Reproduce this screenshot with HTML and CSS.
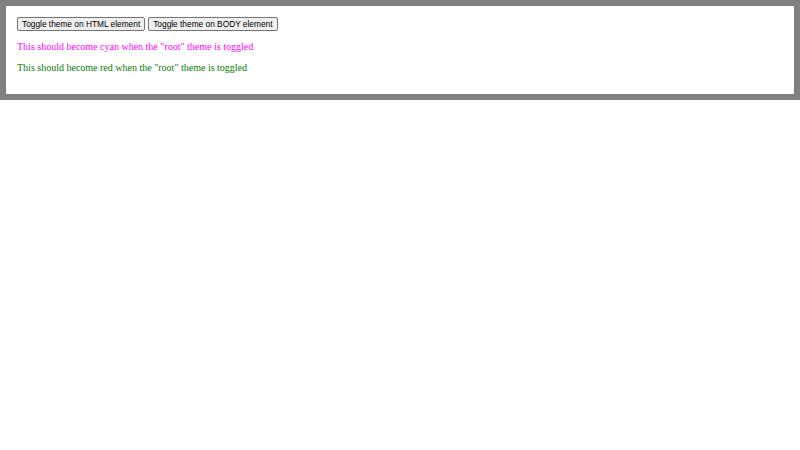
FILE: index.html
```html
<!DOCTYPE html>
<html>
<head>
<meta charset="utf-8">
<link rel="stylesheet" href="styles.css">
</head>
<body>
<div class="frame">
  <div class="toolbar">
    <button class="btn">Toggle theme on HTML element</button>
    <button class="btn">Toggle theme on BODY element</button>
  </div>
  <p class="note note-cyan">This should become cyan when the "root" theme is toggled</p>
  <p class="note note-red">This should become red when the "root" theme is toggled</p>
</div>
</body>
</html>
```
FILE: styles.css
```css
body {
  margin: 0;
  background: #ffffff;
}
.frame {
  border: 6px solid #808080;
  padding: 11px 11px 10.5px;
  font-family: "Liberation Serif", "Times New Roman", serif;
  font-size: 10px;
}
.toolbar {
  display: flex;
  gap: 3px;
}
.btn {
  font-family: "Liberation Sans", Arial, sans-serif;
  font-size: 8.33px;
  line-height: normal;
  padding: 1px 4px;
  margin: 0;
  color: #000000;
  background: #efefef;
  border: 1px solid #767676;
  border-radius: 2px;
}
.note {
  margin: 10px 0;
}
.note-cyan {
  color: #ff00ff;
}
.note-red {
  color: #008000;
}
```
